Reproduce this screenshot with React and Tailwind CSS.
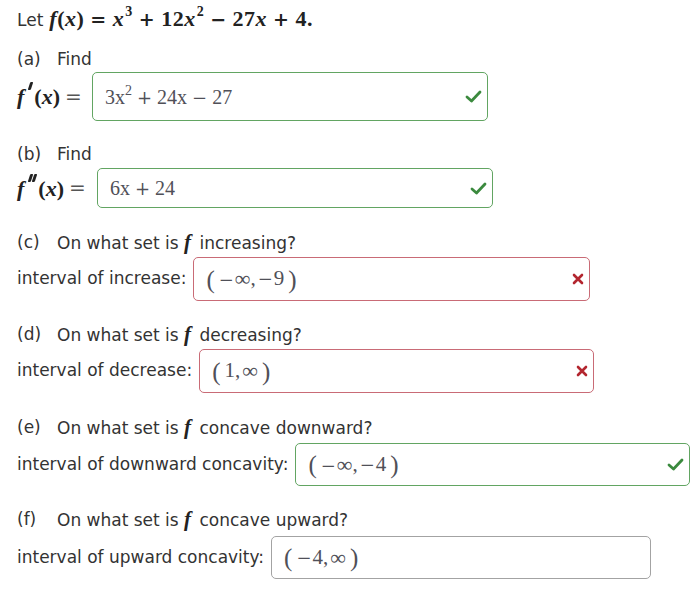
import React from 'react';

const sans = { fontFamily: '"DejaVu Sans", Verdana, sans-serif' };
const serif = { fontFamily: '"Liberation Serif", "Times New Roman", serif' };
const opFont = { fontFamily: '"DejaVu Serif", "Liberation Serif", serif' };

const Check = () => (
  <svg width="17" height="13" viewBox="0 0 17 13" className="shrink-0">
    <polyline points="2,7 6.5,11 15,2" fill="none" stroke="#3b8a3e" strokeWidth="2.8" strokeLinecap="round" strokeLinejoin="round" />
  </svg>
);

const Cross = () => (
  <svg width="12" height="12" viewBox="0 0 12 12" className="shrink-0">
    <path d="M2 2 L10 10 M10 2 L2 10" fill="none" stroke="#b3262f" strokeWidth="2.6" strokeLinecap="round" />
  </svg>
);

const borders = {
  ok: 'border-[#62a562]',
  bad: 'border-[#c96b76]',
  none: 'border-[#a3a3a3]',
};

// binary operator with TeX-like spacing
const Op = ({ children, className = 'mx-[5px] text-[18px] font-normal' }) => (
  <span className={className} style={opFont}>{children}</span>
);

const AnswerBox = ({ status = 'none', className = '', children }) => (
  <div
    className={`flex items-center justify-between rounded-[5px] border-[1.5px] pl-[12px] pr-[5px] ${borders[status]} ${className}`}
  >
    <div className="text-[20px] text-[#505058] whitespace-nowrap" style={serif}>
      {children}
    </div>
    {status === 'ok' && <Check />}
    {status === 'bad' && <Cross />}
  </div>
);

const Question = ({ tag, children }) => (
  <div className="flex items-center h-[20px] text-[17px] text-[#333]" style={sans}>
    <span className="w-[40px]">{tag}</span>
    <span>{children}</span>
  </div>
);

const F = () => (
  <i className="font-bold text-[21px] text-[#222] mr-[3px]" style={serif}>f</i>
);

const MathLabel = ({ children, width }) => (
  <div className={`${width} shrink-0 flex items-center text-[22px] font-bold text-[#222]`} style={serif}>
    {children}
  </div>
);

const TextLabel = ({ children }) => (
  <div className="shrink-0 text-[17px] text-[#333] mr-[7px]" style={sans}>
    {children}
  </div>
);

const Minus = () => <Op className="text-[18px] mr-[1px]">−</Op>;

// prime ticks drawn as short strokes, like TeX's ′
const Prime = ({ count = 1 }) => (
  <span className="inline-flex ml-[5px] mr-[1px] self-start mt-[2px]">
    {Array.from({ length: count }).map((_, i) => (
      <span key={i} className="w-[3px] h-[8px] bg-[#222] rounded-[1px] skew-x-[-18deg] mr-[1px]" />
    ))}
  </span>
);

const Interval = ({ left, right }) => (
  <span className="inline-flex items-center text-[21px]">
    <span className="text-[25px] mr-[4px] leading-none">(</span>
    <span>{left}</span>
    <span className="mr-[2px]">,</span>
    <span>{right}</span>
    <span className="text-[25px] ml-[4px] leading-none">)</span>
  </span>
);

const Inf = () => <span className="text-[22px]">∞</span>;

export default function App() {
  return (
    <div className="w-[700px] h-[591px] bg-white pl-[17px] pt-[2px] overflow-hidden">
      <div className="flex items-baseline h-[24px]">
        <span className="text-[17px] text-[#333] mr-[6px]" style={sans}>Let</span>
        <span className="text-[22px] font-bold text-[#222] tracking-[0.5px]" style={serif}>
          <i>f</i>(<i>x</i>)
          <Op className="mx-[6px] text-[19px] font-bold">=</Op>
          <i>x</i><sup className="text-[14px] top-[-10px] ml-[1px]">3</sup>
          <Op className="mx-[6px] text-[19px] font-bold">+</Op>
          12<i>x</i><sup className="text-[14px] top-[-10px] ml-[1px]">2</sup>
          <Op className="mx-[6px] text-[19px] font-bold">−</Op>
          27<i>x</i>
          <Op className="mx-[6px] text-[19px] font-bold">+</Op>
          4.
        </span>
      </div>

      <div className="mt-[24px]">
        <Question tag="(a)">Find</Question>
        <div className="flex items-center mt-[2px]">
          <MathLabel width="w-[75px]">
            <i>f</i>
            <Prime count={1} />
            (<i>x</i>)
            <Op className="font-normal text-[20px] text-[#555] ml-[5px]">=</Op>
          </MathLabel>
          <AnswerBox status="ok" className="w-[396px] h-[49px]">
            3x<sup className="text-[14px] top-[-9px]">2</sup>
            <Op>+</Op>24x<Op>−</Op>27
          </AnswerBox>
        </div>
      </div>

      <div className="mt-[24px]">
        <Question tag="(b)">Find</Question>
        <div className="flex items-center mt-[3px]">
          <MathLabel width="w-[80px]">
            <i>f</i>
            <Prime count={2} />
            (<i>x</i>)
            <Op className="font-normal text-[20px] text-[#555] ml-[5px]">=</Op>
          </MathLabel>
          <AnswerBox status="ok" className="w-[396px] h-[40px]">
            6x<Op>+</Op>24
          </AnswerBox>
        </div>
      </div>

      <div className="mt-[25px]">
        <Question tag="(c)">On what set is <F /> increasing?</Question>
        <div className="flex items-center mt-[4px]">
          <TextLabel>interval of increase:</TextLabel>
          <AnswerBox status="bad" className="w-[397px] h-[44px]">
            <Interval left={<><Minus /><Inf /></>} right={<><Minus />9</>} />
          </AnswerBox>
        </div>
      </div>

      <div className="mt-[24px]">
        <Question tag="(d)">On what set is <F /> decreasing?</Question>
        <div className="flex items-center mt-[4px]">
          <TextLabel>interval of decrease:</TextLabel>
          <AnswerBox status="bad" className="w-[395px] h-[44px]">
            <Interval left="1" right={<Inf />} />
          </AnswerBox>
        </div>
      </div>

      <div className="mt-[25px]">
        <Question tag="(e)">On what set is <F /> concave downward?</Question>
        <div className="flex items-center mt-[5px]">
          <TextLabel>interval of downward concavity:</TextLabel>
          <AnswerBox status="ok" className="w-[395px] h-[43px]">
            <Interval left={<><Minus /><Inf /></>} right={<><Minus />4</>} />
          </AnswerBox>
        </div>
      </div>

      <div className="mt-[24px]">
        <Question tag="(f)">On what set is <F /> concave upward?</Question>
        <div className="flex items-center mt-[6px]">
          <TextLabel>interval of upward concavity:</TextLabel>
          <AnswerBox status="none" className="w-[380px] h-[43px]">
            <Interval left={<><Minus />4</>} right={<Inf />} />
          </AnswerBox>
        </div>
      </div>
    </div>
  );
}
